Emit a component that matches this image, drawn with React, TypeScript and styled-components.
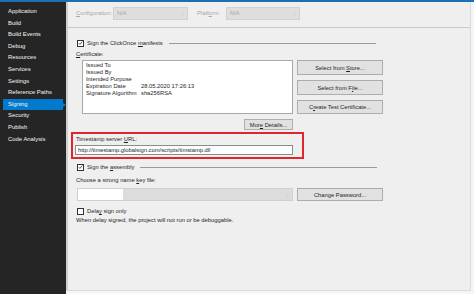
import React from "react";
import styled, { createGlobalStyle } from "styled-components";

const Global = createGlobalStyle`
  html, body { margin: 0; padding: 0; background: #f0f0f0; }
  body { font-family: "Liberation Sans", Arial, sans-serif; }
  * { box-sizing: border-box; }
`;

const Frame = styled.div`
  width: 474px;
  height: 294px;
  display: flex;
  border-top: 2px solid #1c6fb5;
  overflow: hidden;
`;

const Sidebar = styled.nav`
  width: 66px;
  background: #252526;
  padding-top: 4px;
  display: flex;
  flex-direction: column;
`;

const NavItem = styled.div<{ $active?: boolean }>`
  position: relative;
  height: 11.6px;
  line-height: 11.6px;
  margin-right: 3px;
  margin-left: ${(p) => (p.$active ? "3px" : "0")};
  padding-left: ${(p) => (p.$active ? "5px" : "8px")};
  font-size: 5.9px;
  color: #f4f4f4;
  background: ${(p) => (p.$active ? "#007acc" : "transparent")};
  white-space: nowrap;
`;

const NavArrow = styled.span`
  position: absolute;
  right: -3px;
  top: 3.8px;
  width: 0;
  height: 0;
  border-top: 2px solid transparent;
  border-bottom: 2px solid transparent;
  border-left: 3px solid #007acc;
`;

const MainWrap = styled.div`
  flex: 1;
  display: flex;
  background: #f5f5f5;
  padding: 0 3px 3px 0;
`;

const Page = styled.main`
  flex: 1;
  background: #efefef;
  border-left: 2px solid #cfcfcf;
  border-right: 1px solid #dadada;
  border-bottom: 1px solid #dadada;
  display: flex;
  flex-direction: column;
  font-size: 5.8px;
  color: #1e1e1e;
`;

const ConfigRow = styled.div`
  height: 26px;
  border-bottom: 1px solid #c9c9c9;
  display: flex;
  align-items: center;
  padding: 0 0 3px 8px;
`;

const DisabledLabel = styled.span<{ $w: number }>`
  width: ${(p) => p.$w}px;
  color: #a8a8a8;
`;

const DisabledSelect = styled.div<{ $w: number; $mr?: number }>`
  width: ${(p) => p.$w}px;
  margin-right: ${(p) => p.$mr ?? 0}px;
  height: 13px;
  background: #dedede;
  border: 1px solid #d2d2d2;
  color: #a8a8a8;
  display: flex;
  align-items: center;
  justify-content: space-between;
  padding: 0 3px 0 3px;
`;

const Caret = styled.span`
  font-size: 4px;
  color: #b0b0b0;
`;

const Content = styled.section`
  display: flex;
  flex-direction: column;
  padding-left: 8px;
`;

const CheckRow = styled.div<{ $mt: number; $lineEnd?: number }>`
  display: flex;
  align-items: center;
  height: 8px;
  margin-top: ${(p) => p.$mt}px;
  padding-left: 1px;
  width: ${(p) => p.$lineEnd ?? 300}px;
`;

const Box = styled.span`
  width: 7px;
  height: 7px;
  border: 1px solid #333;
  background: #fff;
  display: flex;
  align-items: center;
  justify-content: center;
  margin-right: 3px;
  flex: none;
`;

const Rule = styled.span`
  flex: 1;
  height: 1px;
  background: #9a9a9a;
  margin-left: 6px;
`;

const Label = styled.div<{ $mt: number }>`
  margin-top: ${(p) => p.$mt}px;
  line-height: 7px;
  height: 7px;
`;

const CertRow = styled.div`
  display: flex;
  margin-top: 2px;
  padding-left: 6px;
  gap: 4px;
`;

const CertBox = styled.div`
  width: 211px;
  height: 54px;
  background: #fff;
  border: 1px solid #a9a9a9;
  padding: 1px 3px;
  display: grid;
  grid-template-columns: 55px 1fr;
  grid-auto-rows: 7px;
  line-height: 7px;
  align-content: start;
`;

const ButtonCol = styled.div`
  display: flex;
  flex-direction: column;
  gap: 5px;
`;

const Button = styled.div<{ $w: number; $h?: number }>`
  width: ${(p) => p.$w}px;
  height: ${(p) => p.$h ?? 14}px;
  background: #e1e1e1;
  border: 1px solid #adadad;
  display: flex;
  align-items: center;
  justify-content: center;
  color: #1e1e1e;
  white-space: nowrap;
`;

const RightRow = styled.div`
  width: 217px;
  display: flex;
  justify-content: flex-end;
  margin-top: 5px;
`;

const Highlight = styled.div`
  margin-left: -5px;
  margin-top: 2px;
  width: 233px;
  height: 27px;
  border: 2px solid #e0262b;
  padding: 2px 0 0 3px;
  display: flex;
  flex-direction: column;
`;

const UrlInput = styled.div`
  margin-top: 2px;
  width: 218px;
  margin-left: -1px;
  height: 10px;
  background: #fff;
  border: 1px solid #8c8c8c;
  padding-left: 2px;
  display: flex;
  align-items: center;
  white-space: nowrap;
`;

const KeyRow = styled.div`
  display: flex;
  gap: 4px;
  margin-top: 4px;
  padding-left: 1px;
`;

const KeyCombo = styled.div`
  width: 216px;
  height: 13px;
  display: flex;
  border: 1px solid #d0d0d0;
  background: #dcdcdc;
`;

const KeyWhite = styled.div`
  width: 45px;
  background: #fff;
`;

const KeyRest = styled.div`
  flex: 1;
  display: flex;
  align-items: center;
  justify-content: flex-end;
  padding-right: 3px;
`;

const U = styled.span`
  text-decoration: underline;
`;

const Check = () => (
  <svg width="6" height="6" viewBox="0 0 6 6">
    <path d="M0.8 3.1 L2.3 4.6 L5.2 1.2" stroke="#222" strokeWidth="0.9" fill="none" />
  </svg>
);

const nav = [
  "Application",
  "Build",
  "Build Events",
  "Debug",
  "Resources",
  "Services",
  "Settings",
  "Reference Paths",
  "Signing",
  "Security",
  "Publish",
  "Code Analysis",
];

const cert: [string, string][] = [
  ["Issued To", ""],
  ["Issued By", ""],
  ["Intended Purpose", ""],
  ["Expiration Date", "28.05.2020 17:26:13"],
  ["Signature Algorithm", "sha256RSA"],
];

export default function App() {
  return (
    <>
      <Global />
      <Frame>
        <Sidebar>
          {nav.map((n) => (
            <NavItem key={n} $active={n === "Signing"}>
              {n}
              {n === "Signing" && <NavArrow />}
            </NavItem>
          ))}
        </Sidebar>
        <MainWrap>
          <Page>
            <ConfigRow>
              <DisabledLabel $w={37}>
                <U>C</U>onfiguration:
              </DisabledLabel>
              <DisabledSelect $w={75} $mr={9}>
                <span>N/A</span>
                <Caret>⌄</Caret>
              </DisabledSelect>
              <DisabledLabel $w={29}>
                Platf<U>o</U>rm:
              </DisabledLabel>
              <DisabledSelect $w={74}>
                <span>N/A</span>
                <Caret>⌄</Caret>
              </DisabledSelect>
            </ConfigRow>
            <Content>
              <CheckRow $mt={11} $lineEnd={300}>
                <Box>
                  <Check />
                </Box>
                <span>
                  Sign the ClickOnce <U>m</U>anifests
                </span>
                <Rule />
              </CheckRow>
              <Label $mt={4}>
                <U>C</U>ertificate:
              </Label>
              <CertRow>
                <CertBox>
                  {cert.map(([k, v]) => (
                    <React.Fragment key={k}>
                      <span>{k}</span>
                      <span>{v}</span>
                    </React.Fragment>
                  ))}
                </CertBox>
                <ButtonCol>
                  <Button $w={86} $h={15}>
                    <span>
                      Select from <U>S</U>tore...
                    </span>
                  </Button>
                  <Button $w={86} $h={15}>
                    <span>
                      Select from F<U>i</U>le...
                    </span>
                  </Button>
                  <Button $w={86}>
                    <span>
                      C<U>r</U>eate Test Certificate...
                    </span>
                  </Button>
                </ButtonCol>
              </CertRow>
              <RightRow>
                <Button $w={49} $h={11}>
                  <span>
                    Mor<U>e</U> Details...
                  </span>
                </Button>
              </RightRow>
              <Highlight>
                <Label $mt={0}>
                  Timestamp server <U>U</U>RL:
                </Label>
                <UrlInput>http://timestamp.globalsign.com/scripts/timstamp.dll</UrlInput>
              </Highlight>
              <CheckRow $mt={4} $lineEnd={301}>
                <Box>
                  <Check />
                </Box>
                <span>
                  Sign the <U>a</U>ssembly
                </span>
                <Rule />
              </CheckRow>
              <Label $mt={6}>
                Choose a strong name <U>k</U>ey file:
              </Label>
              <KeyRow>
                <KeyCombo>
                  <KeyWhite />
                  <KeyRest>
                    <Caret>⌄</Caret>
                  </KeyRest>
                </KeyCombo>
                <Button $w={86} $h={13}>
                  <span>Change Password...</span>
                </Button>
              </KeyRow>
              <CheckRow $mt={6}>
                <Box />
                <span>
                  Dela<U>y</U> sign only
                </span>
              </CheckRow>
              <Label $mt={2}>When delay signed, the project will not run or be debuggable.</Label>
            </Content>
          </Page>
        </MainWrap>
      </Frame>
    </>
  );
}
